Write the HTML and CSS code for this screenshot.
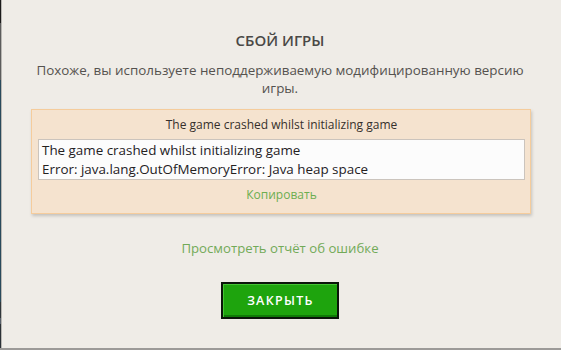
FILE: index.html
```html
<!DOCTYPE html>
<html lang="ru">
<head>
<meta charset="utf-8">
<title>Сбой игры</title>
<link rel="stylesheet" href="styles.css">
</head>
<body>
<div class="app">
  <div class="edge"></div>
  <main class="dialog">
    <h1 class="title">СБОЙ ИГРЫ</h1>
    <p class="subtitle">Похоже, вы используете неподдерживаемую модифицированную версию игры.</p>
    <section class="crash">
      <div class="crash-head">The game crashed whilst initializing game</div>
      <div class="crash-log">The game crashed whilst initializing game<br>Error: java.lang.OutOfMemoryError: Java heap space</div>
      <a class="copy" href="#">Копировать</a>
    </section>
    <a class="report" href="#">Просмотреть отчёт об ошибке</a>
    <button class="close" type="button">ЗАКРЫТЬ</button>
  </main>
</div>
</body>
</html>
```

FILE: styles.css
```css
* { box-sizing: border-box; }
html, body { margin: 0; padding: 0; }
body {
  background: #efece7;
  font-family: "Open Sans", "Noto Sans", sans-serif;
}
.app {
  display: flex;
  width: 561px;
  height: 350px;
  border-bottom: 2px solid #9c9a98;
  background: #efece7;
}
.edge {
  flex: 0 0 2px;
  background: linear-gradient(to bottom,
    #1b1b1b 0, #1b1b1b 23px,
    #5c5c5c 23px, #5c5c5c 80px,
    #294a5c 80px, #294a5c 302px,
    #30363a 302px, #30363a 318px,
    #58606a 318px, #58606a 324px,
    #2b3136 324px, #2b3136 350px);
  border-right: 1px solid #b9b7b3;
}
.dialog {
  flex: 1;
  display: flex;
  flex-direction: column;
  align-items: center;
  padding: 30px 0 0 0;
  margin-left: -3px;
}
.title {
  margin: 0;
  font-size: 15px;
  line-height: 20px;
  font-weight: 600;
  color: #4a4846;
}
.subtitle {
  margin: 11px 0 0 0;
  width: 500px;
  text-align: center;
  font-size: 13.4px;
  line-height: 18px;
  color: #55524f;
}
.crash {
  margin-top: 12px;
  width: 500px;
  margin-left: 2px;
  background: #f5e3cf;
  border: 1px solid #f5cc9c;
  box-shadow: 1px 2px 3px rgba(0, 0, 0, 0.18);
  padding: 7px 5px 10px 6px;
  display: flex;
  flex-direction: column;
  align-items: center;
}
.crash-head {
  font-size: 12px;
  line-height: 16px;
  color: #35302c;
}
.crash-log {
  margin-top: 6px;
  width: 100%;
  height: 41px;
  background: #fcfcfc;
  border: 1px solid #cbc4bd;
  padding: 1px 3px 0 3px;
  font-size: 13.4px;
  line-height: 19px;
  color: #24211f;
}
.copy {
  margin-top: 7px;
  font-size: 12px;
  line-height: 16px;
  color: #6cae50;
  text-decoration: none;
}
.report {
  margin-top: 25px;
  font-size: 13.2px;
  line-height: 18px;
  color: #72aa58;
  text-decoration: none;
}
.close {
  margin-top: 25px;
  width: 118px;
  height: 37px;
  border: 2px solid #0b150a;
  background: #1ea40d;
  box-shadow: inset 1px 1px 0 #44c433, inset 0 -2px 0 #0f7a07;
  color: #ffffff;
  font-family: "Open Sans", "Noto Sans", sans-serif;
  font-size: 12.5px;
  font-weight: 600;
  letter-spacing: 1.3px;
  padding: 0 0 0 1px;
  cursor: pointer;
}
```
